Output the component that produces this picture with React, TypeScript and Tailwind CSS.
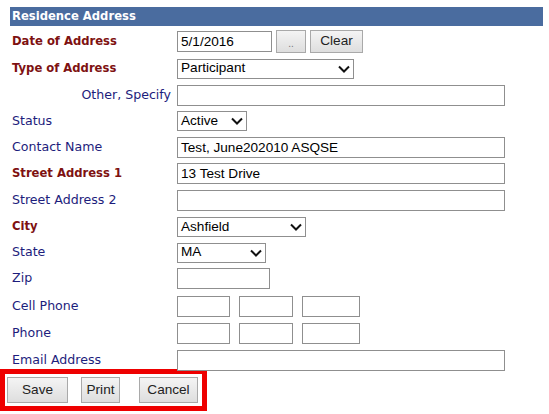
const labelFont = { fontFamily: '"DejaVu Sans", Verdana, sans-serif' };
const fieldFont = { fontFamily: '"Liberation Sans", Arial, sans-serif' };

function Chevron() {
  return (
    <svg width="12" height="8" viewBox="0 0 12 8" className="shrink-0">
      <path d="M1 1.5 L6 6.5 L11 1.5" fill="none" stroke="#111" strokeWidth="2" />
    </svg>
  );
}

function TextBox({ w, value }: { w: string; value?: string }) {
  return (
    <div
      className={`${w} h-[21px] border border-[#8f8f8f] bg-white pl-[3px] text-[13.6px] leading-[19px] text-black`}
      style={fieldFont}
    >
      {value}
    </div>
  );
}

function SelectBox({ w, value }: { w: string; value: string }) {
  return (
    <div
      className={`${w} h-[20px] border border-[#8f8f8f] bg-white pl-[3px] pr-[3px] flex items-center justify-between text-[13.6px] text-black`}
      style={fieldFont}
    >
      <span>{value}</span>
      <Chevron />
    </div>
  );
}

function Btn({ w, h, children }: { w: string; h: string; children: React.ReactNode }) {
  return (
    <div
      className={`${w} ${h} flex items-center justify-center border border-[#a9a9a9] bg-gradient-to-b from-[#f4f4f4] to-[#dedede] text-[13.6px] text-[#222]`}
      style={fieldFont}
    >
      {children}
    </div>
  );
}

type Row = {
  label: string;
  req?: boolean;
  right?: boolean;
  h: string;
  field: React.ReactNode;
};

export default function App() {
  const phoneBoxes = (
    <div className="flex gap-[9px]">
      <TextBox w="w-[53px]" />
      <TextBox w="w-[54px]" />
      <TextBox w="w-[58px]" />
    </div>
  );

  const rows: Row[] = [
    {
      label: "Date of Address",
      req: true,
      h: "h-[27px]",
      field: (
        <div className="flex items-center">
          <TextBox w="w-[95px]" value="5/1/2016" />
          <div className="ml-[4px]">
            <Btn w="w-[30px]" h="h-[23px]">
              <span className="text-[10px] text-[#777] pt-[4px]">..</span>
            </Btn>
          </div>
          <div className="ml-[4px]">
            <Btn w="w-[53px]" h="h-[23px]">Clear</Btn>
          </div>
        </div>
      ),
    },
    { label: "Type of Address", req: true, h: "h-[27px]", field: <SelectBox w="w-[177px]" value="Participant" /> },
    { label: "Other, Specify", right: true, h: "h-[26px]", field: <TextBox w="w-[328px]" /> },
    { label: "Status", h: "h-[26px]", field: <SelectBox w="w-[70px]" value="Active" /> },
    { label: "Contact Name", h: "h-[26px]", field: <TextBox w="w-[328px]" value="Test, June202010 ASQSE" /> },
    { label: "Street Address 1", req: true, h: "h-[27px]", field: <TextBox w="w-[328px]" value="13 Test Drive" /> },
    { label: "Street Address 2", h: "h-[27px]", field: <TextBox w="w-[328px]" /> },
    { label: "City", req: true, h: "h-[26px]", field: <SelectBox w="w-[129px]" value="Ashfield" /> },
    { label: "State", h: "h-[25px]", field: <SelectBox w="w-[89px]" value="MA" /> },
    { label: "Zip", h: "h-[27px]", field: <TextBox w="w-[93px]" /> },
    { label: "Cell Phone", h: "h-[28px]", field: phoneBoxes },
    { label: "Phone", h: "h-[27px]", field: phoneBoxes },
    { label: "Email Address", h: "h-[26px]", field: <TextBox w="w-[328px]" /> },
  ];

  return (
    <div className="w-[549px] h-[414px] bg-white overflow-hidden relative">
      <div className="pt-[7px] pl-[10px] pr-[6px]">
        <div
          className="h-[19px] bg-[#4a6c9f] text-white font-bold text-[11.6px] leading-[19px] pl-[2px]"
          style={labelFont}
        >
          Residence Address
        </div>
      </div>
      <div className="pt-[2px]">
        {rows.map((r, i) => (
          <div key={i} className={`flex items-center ${r.h}`}>
            <div
              className={`w-[177px] shrink-0 ${r.right ? "text-right pr-[6px]" : "pl-[12px]"} ${
                r.req ? "font-bold text-[#7e1111] text-[11.6px]" : "text-[#1d1d7c] text-[12.6px]"
              }`}
              style={labelFont}
            >
              {r.label}
            </div>
            {r.field}
          </div>
        ))}
      </div>
      <div className="-mt-[4px] w-[207px] h-[42px] border-[5px] border-[#ee0000] flex items-center pl-[2px]">
        <Btn w="w-[61px]" h="h-[26px]">Save</Btn>
        <div className="ml-[13px]">
          <Btn w="w-[39px]" h="h-[26px]">Print</Btn>
        </div>
        <div className="ml-[19px]">
          <Btn w="w-[59px]" h="h-[26px]">Cancel</Btn>
        </div>
      </div>
    </div>
  );
}
